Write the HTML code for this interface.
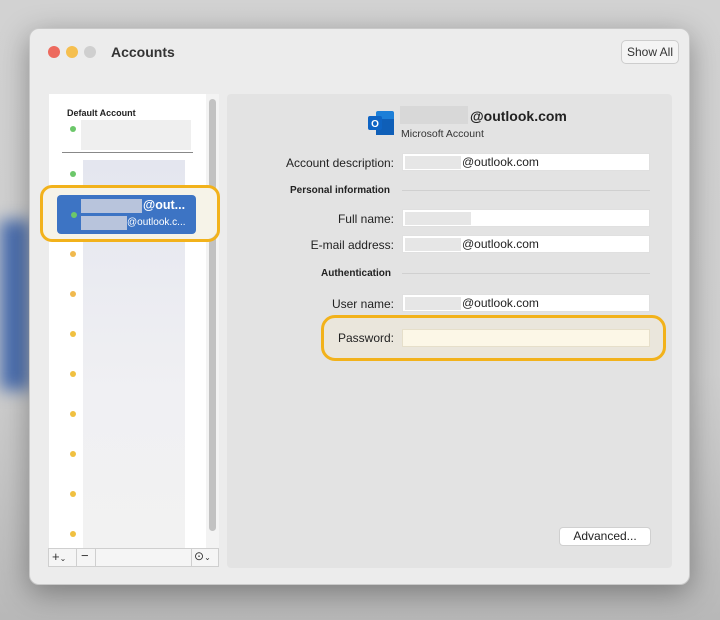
<!DOCTYPE html>
<html><head><style>
*{box-sizing:border-box;margin:0;padding:0}
body{width:720px;height:620px;overflow:hidden;font-family:"Liberation Sans",sans-serif;background:linear-gradient(180deg,#d2d2d2,#cfcfcf 60%,#b8b8b8);position:relative}
.bgblue{position:absolute;left:0;top:220px;width:30px;height:170px;background:#4b6fb0;filter:blur(8px)}
.win{position:absolute;left:29px;top:28px;width:661px;height:557px;background:#ececec;border-radius:10px;box-shadow:0 8px 30px rgba(0,0,0,.35);border:1px solid #c9c9c9}
.dot{position:absolute;top:17px;width:12px;height:12px;border-radius:50%}
.title{position:absolute;left:81px;top:15px;font-size:14px;font-weight:bold;color:#333}
.showall{position:absolute;left:591px;top:11px;width:58px;height:24px;border:1px solid #cdcdcd;border-radius:5px;background:#f4f4f4;font-size:12px;color:#333;text-align:center;line-height:22px}
.list{position:absolute;left:19px;top:65px;width:157px;height:455px;background:#fff}
.scroll{position:absolute;left:176px;top:65px;width:13px;height:470px;background:#f3f3f3}
.thumb{position:absolute;left:3px;top:5px;width:7px;height:432px;border-radius:4px;background:#c2c2c2}
.blur{position:absolute;background:#ebebef}
.ld{position:absolute;left:21px;width:6px;height:6px;border-radius:50%}
.panel{position:absolute;left:197px;top:65px;width:445px;height:474px;background:#e3e3e3;border-radius:4px}
.lab{position:absolute;font-size:12px;color:#222;text-align:right;width:170px;left:-3px}
.fld{position:absolute;left:175px;width:248px;height:18px;background:#fff;border:1px solid #e0e0e0;font-size:12px;color:#222;line-height:16px}
.fld .g{position:absolute;left:2px;top:2px;height:13px;background:#e6e6e6}
.sec{position:absolute;font-size:10px;font-weight:bold;color:#222}
.hr{position:absolute;height:1px;background:#d0d0d0;left:175px;width:248px}
.hl{position:absolute;border:3px solid #f2b21b;border-radius:12px;z-index:5}
</style></head><body>
<div class="bgblue"></div>
<div class="win">
<div class="dot" style="left:18px;background:#ed6a5e"></div>
<div class="dot" style="left:36px;background:#f5bf4f"></div>
<div class="dot" style="left:54px;background:#cfcfcf"></div>
<div class="title">Accounts</div>
<div class="showall">Show All</div>

<div class="list">
<div style="position:absolute;left:18px;top:14px;font-size:9px;font-weight:bold;color:#222">Default Account</div>
<div class="blur" style="left:32px;top:26px;width:110px;height:30px;background:#efefef"></div>
<div class="ld" style="top:32px;background:#6cc76a"></div>
<div style="position:absolute;left:13px;top:58px;width:131px;height:1px;background:#888"></div>
<div class="blur" style="left:34px;top:66px;width:102px;height:390px;background:linear-gradient(180deg,#e4e6ef,#f0f0f3 60%,#f2f2f2)"></div>
<div class="ld" style="top:77px;background:#6cc76a"></div>
<div class="ld" style="top:157px;background:#f0b94e"></div>
<div class="ld" style="top:197px;background:#f0b94e"></div>
<div class="ld" style="top:237px;background:#f0c040"></div>
<div class="ld" style="top:277px;background:#f0c040"></div>
<div class="ld" style="top:317px;background:#f0c040"></div>
<div class="ld" style="top:357px;background:#f0c040"></div>
<div class="ld" style="top:397px;background:#f0c040"></div>
<div class="ld" style="top:437px;background:#f0c040"></div>
</div>
<div class="scroll"><div class="thumb"></div></div>
<div style="position:absolute;left:11px;top:157px;width:176px;height:53px;background:#f6f3e8;border-radius:10px;z-index:4"></div>
<div style="position:absolute;left:27px;top:166px;width:139px;height:39px;background:#3d74c4;border-radius:4px;z-index:6">
<div style="position:absolute;left:24px;top:4px;width:61px;height:14px;background:#b8c4dc"></div>
<div style="position:absolute;left:86px;top:3px;color:#fff;font-weight:bold;font-size:12.5px">@out...</div>
<div style="position:absolute;left:24px;top:21px;width:46px;height:14px;background:#b8c4dc"></div>
<div style="position:absolute;left:70px;top:22px;color:#fff;font-size:10px">@outlook.c...</div>
<div class="ld" style="left:14px;top:17px;background:#6cc76a"></div>
</div>
<div class="hl" style="left:10px;top:156px;width:180px;height:57px"></div>
<div style="position:absolute;left:18px;top:519px;width:171px;height:19px;background:#f5f5f5;border:1px solid #cfcfcf;font-size:13px;color:#333">
<span style="position:absolute;left:3px;top:0">+<span style="font-size:8px">⌄</span></span>
<div style="position:absolute;left:27px;top:0;width:1px;height:17px;background:#cfcfcf"></div>
<span style="position:absolute;left:32px;top:-1px">−</span>
<div style="position:absolute;left:46px;top:0;width:1px;height:17px;background:#cfcfcf"></div>
<div style="position:absolute;left:142px;top:0;width:1px;height:17px;background:#cfcfcf"></div>
<span style="position:absolute;left:145px;top:0;font-size:12px">⊙<span style="font-size:8px">⌄</span></span>
</div>

<div class="panel">
<svg style="position:absolute;left:140px;top:16px" width="28" height="26" viewBox="0 0 28 26"><rect x="9" y="1" width="18" height="24" rx="2" fill="#1c7fd8"/><rect x="9" y="9" width="18" height="16" fill="#0f5fb8"/><rect x="1" y="6" width="14" height="14" rx="2" fill="#0e64c4"/><text x="8" y="17" font-size="10" font-family="Liberation Sans" font-weight="bold" fill="#fff" text-anchor="middle">O</text></svg>
<div style="position:absolute;left:173px;top:12px;width:68px;height:18px;background:#d8d8d8"></div>
<div style="position:absolute;left:243px;top:14px;font-size:14px;font-weight:bold;color:#222">@outlook.com</div>
<div style="position:absolute;left:174px;top:34px;font-size:10.5px;color:#333">Microsoft Account</div>

<div class="lab" style="top:62px">Account description:</div>
<div class="fld" style="top:59px"><div class="g" style="width:56px"></div><span style="position:absolute;left:59px">@outlook.com</span></div>
<div class="sec" style="left:63px;top:91px">Personal information</div>
<div class="hr" style="top:96px"></div>
<div class="lab" style="top:118px">Full name:</div>
<div class="fld" style="top:115px"><div class="g" style="width:66px"></div></div>
<div class="lab" style="top:144px">E-mail address:</div>
<div class="fld" style="top:141px"><div class="g" style="width:56px"></div><span style="position:absolute;left:59px">@outlook.com</span></div>
<div class="sec" style="left:94px;top:174px">Authentication</div>
<div class="hr" style="top:179px"></div>
<div class="lab" style="top:203px">User name:</div>
<div class="fld" style="top:200px"><div class="g" style="width:56px"></div><span style="position:absolute;left:59px">@outlook.com</span></div>
<div style="position:absolute;left:94px;top:221px;width:345px;height:46px;border:3px solid #f2b21b;border-radius:14px;background:#eae6dc"></div>
<div class="lab" style="top:237px">Password:</div>
<div class="fld" style="top:235px;background:#fcf7e7;border-color:#e6dfca"></div>
<div style="position:absolute;left:332px;top:433px;width:92px;height:19px;background:#fff;border:1px solid #d0d0d0;border-radius:4px;font-size:12px;color:#222;text-align:center;line-height:17px">Advanced...</div>
</div>
</div>
</body></html>
